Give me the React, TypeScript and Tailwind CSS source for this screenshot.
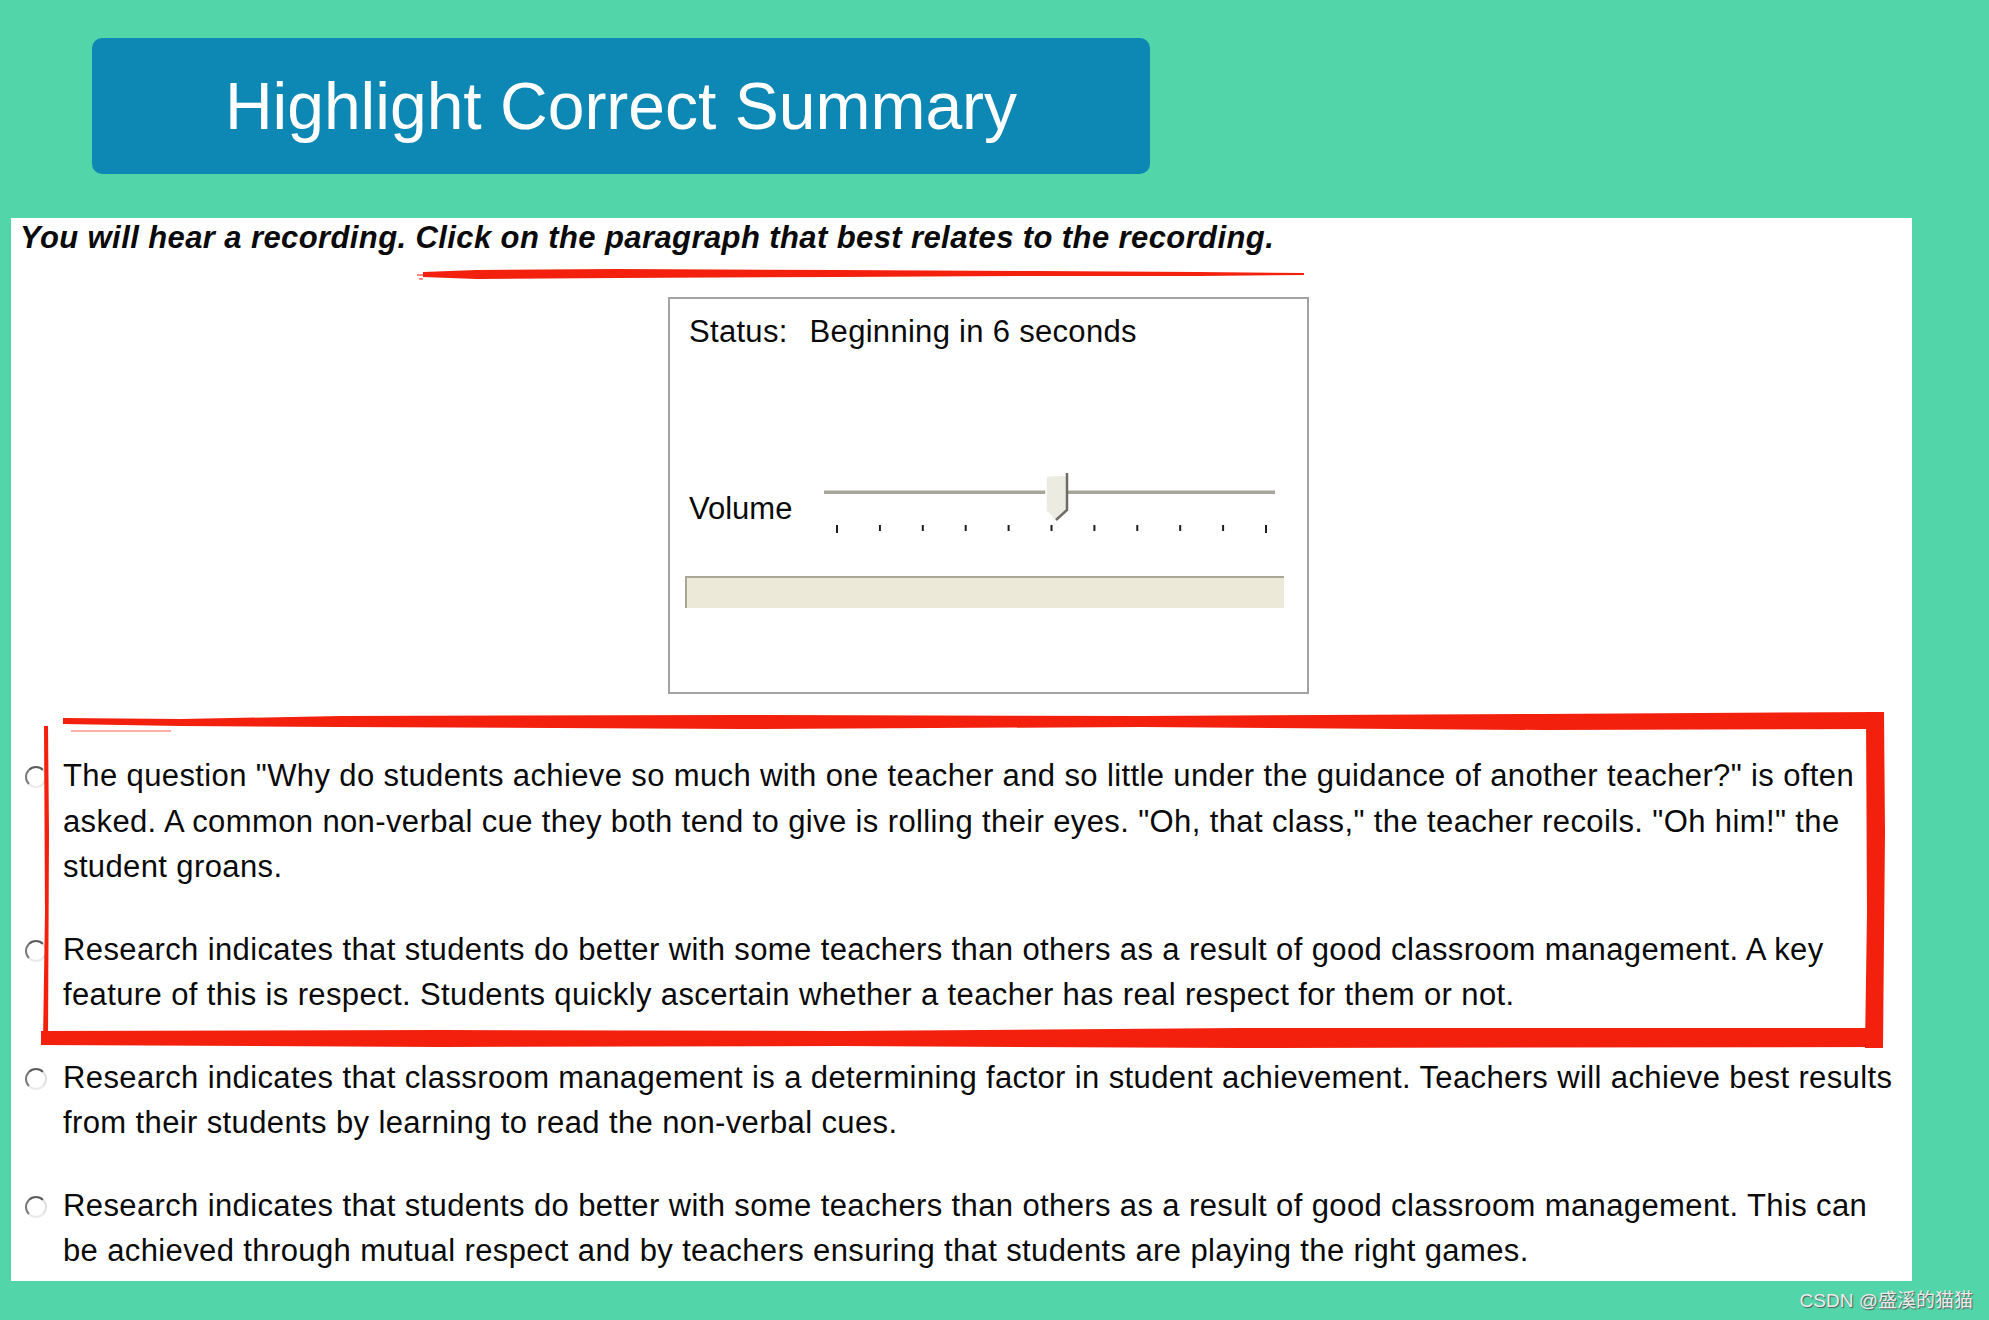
import React from 'react';

const options: string[][] = [
  [
    'The question "Why do students achieve so much with one teacher and so little under the guidance of another teacher?" is often',
    'asked. A common non-verbal cue they both tend to give is rolling their eyes. "Oh, that class," the teacher recoils. "Oh him!" the',
    'student groans.',
  ],
  [
    'Research indicates that students do better with some teachers than others as a result of good classroom management. A key',
    'feature of this is respect. Students quickly ascertain whether a teacher has real respect for them or not.',
  ],
  [
    'Research indicates that classroom management is a determining factor in student achievement. Teachers will achieve best results',
    'from their students by learning to read the non-verbal cues.',
  ],
  [
    'Research indicates that students do better with some teachers than others as a result of good classroom management. This can',
    'be achieved through mutual respect and by teachers ensuring that students are playing the right games.',
  ],
];

const Radio = () => (
  <div className="mt-[13px] h-[22px] w-[22px] shrink-0 rounded-full border-2 border-t-[#5c5c5c] border-l-[#7a7a7a] border-r-[#e0e0e0] border-b-[#ebebeb] bg-white" />
);

const VolumeSlider = () => {
  const ticks = Array.from({ length: 11 }, (_, i) => 16 + i * 42.9);
  return (
    <svg width="460" height="62" viewBox="0 0 460 62">
      <rect x="4" y="17" width="451" height="4" fill="#a6a599" />
      <rect x="4" y="17" width="451" height="1" fill="#d3d2c8" />
      {ticks.map((x, i) => (
        <rect
          key={i}
          x={x}
          y="52"
          width="2"
          height={i === 0 || i === 10 ? 8 : 6}
          fill="#1e1e1e"
        />
      ))}
      <polygon points="226,3 247,1 247,37 236,47 226,37" fill="#ecebe2" />
      <path d="M226,37 L226,3 L246,2" stroke="#ffffff" strokeWidth="1.5" fill="none" />
      <path d="M247,0 L247,37 L236,47" stroke="#6e6d64" strokeWidth="2.5" fill="none" />
    </svg>
  );
};

const Underline = () => (
  <svg width="900" height="14" viewBox="0 0 900 14" className="ml-[406px] mt-[11px] block">
    <polygon
      points="6,5 60,3 200,2 420,3 620,4 780,5 887,6 887,8 780,9 620,9 420,10 200,11 60,12 6,10"
      fill="#f2200c"
    />
    <path d="M0,8 L8,8 M2,12 L6,12" stroke="#f2200c" strokeWidth="1.2" />
  </svg>
);

const RedBox = () => (
  <svg
    width="1850"
    height="340"
    viewBox="0 0 1850 340"
    className="pointer-events-none absolute left-[30px] top-[494px]"
  >
    <g fill="#f2200c">
      {/* top */}
      <polygon points="22,6 140,7 300,4 700,3 1100,4 1500,2 1842,0 1842,17 1500,18 1100,15 700,17 300,15 140,14 22,12" />
      {/* right */}
      <polygon points="1825,0 1843,0 1844,120 1842,336 1824,336 1826,200" />
      {/* bottom */}
      <polygon points="0,319 400,318 800,319 1200,316 1842,316 1842,335 1200,336 800,334 400,335 0,333" />
      {/* left */}
      <polygon points="3,14 7,14 8,120 7,330 2,330 4,200" />
    </g>
    <path d="M30,19 L130,19" stroke="#f2200c" strokeWidth="1" opacity="0.7" fill="none" />
  </svg>
);

export default function App() {
  return (
    <div className="relative h-[1320px] w-[1989px] overflow-hidden bg-[#52d6a9] font-['Liberation_Sans',Arial,sans-serif]">
      <div className="ml-[92px] pt-[38px]">
        <div className="flex h-[136px] w-[1058px] items-center justify-center rounded-[10px] bg-[#0d88b5]">
          <h1 className="text-[66px] leading-none text-white">Highlight Correct Summary</h1>
        </div>
      </div>

      <div className="relative ml-[11px] mt-[44px] h-[1063px] w-[1901px] bg-white">
        <p className="whitespace-nowrap pl-[9px] pt-[2px] text-[31px] font-bold italic leading-[36px] tracking-[0.4px] text-[#0a0a0a]">
          You will hear a recording. Click on the paragraph that best relates to the recording.
        </p>
        <Underline />

        <div className="ml-[657px] mt-[16px] flex h-[397px] w-[641px] flex-col border-2 border-[#a3a3a3] bg-white pl-[19px] pt-[15px] text-[31px] leading-[36px] text-[#0a0a0a]">
          <div className="flex whitespace-nowrap tracking-[0.3px]">
            <span>Status:</span>
            <span className="ml-[22px]">Beginning in 6 seconds</span>
          </div>
          <div className="mt-[123px] flex">
            <span className="mt-[18px] w-[131px]">Volume</span>
            <VolumeSlider />
          </div>
          <div className="-ml-[4px] mt-[41px] h-[32px] w-[599px] border-l-2 border-t-2 border-[#a9a698] bg-[#ece9d8]" />
        </div>

        <div className="mt-[59px] flex flex-col gap-[37px] pl-[14px]">
          {options.map((lines, i) => (
            <div key={i} className="flex gap-[16px]">
              <Radio />
              <div className="text-[31px] leading-[45.5px] tracking-[0.38px] text-[#0a0a0a]">
                {lines.map((l, j) => (
                  <div key={j} className="whitespace-nowrap">
                    {l}
                  </div>
                ))}
              </div>
            </div>
          ))}
        </div>

        <RedBox />
      </div>

      <div className="absolute right-[16px] top-[1290px] text-[19px] leading-[22px] text-[#ececec] [text-shadow:1px_1px_1px_#555] font-['Liberation_Sans','Noto_Sans_CJK_SC',sans-serif]">
        CSDN @盛溪的猫猫
      </div>
    </div>
  );
}
